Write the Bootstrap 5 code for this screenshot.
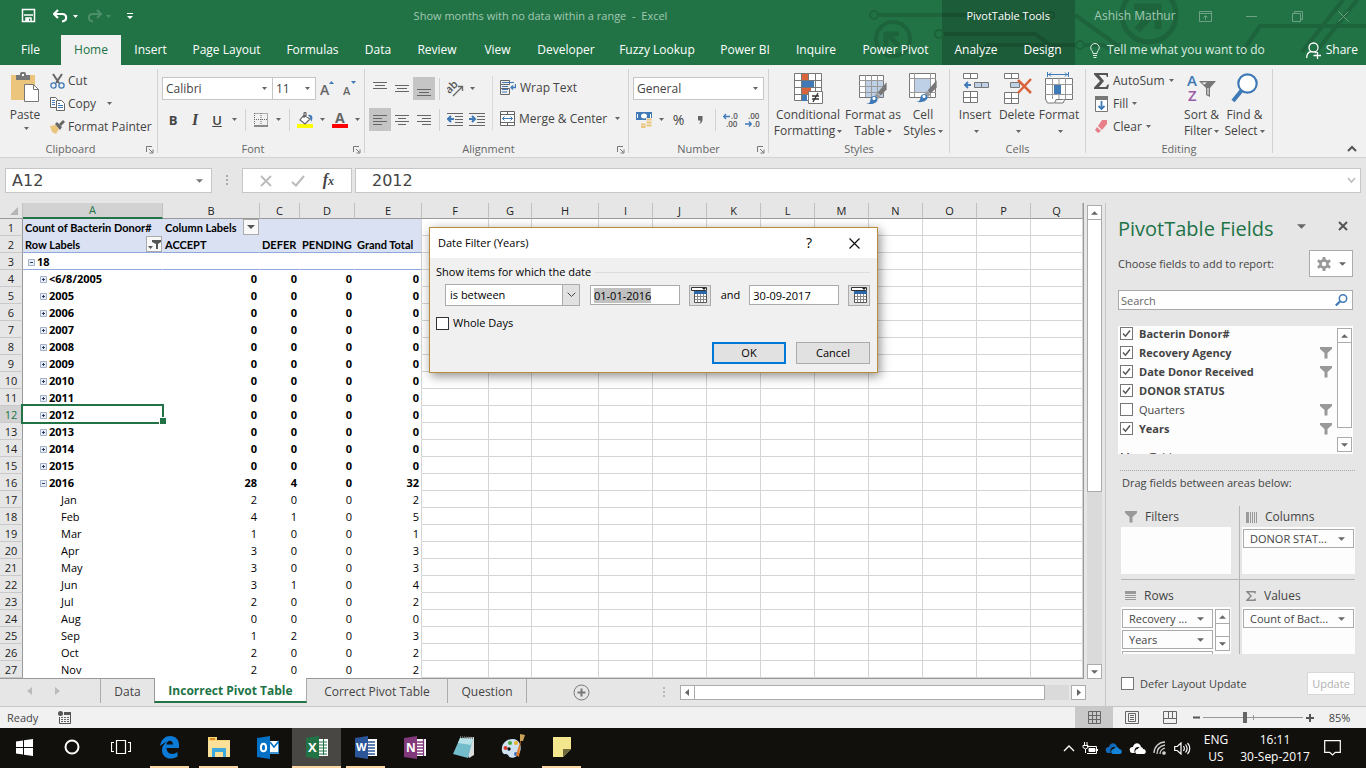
<!DOCTYPE html>
<html lang="en">
<head>
<meta charset="utf-8">
<meta name="viewport" content="width=device-width, initial-scale=1">
<title>Show months with no data within a range - Excel</title>
<link rel="stylesheet" href="https://cdn.jsdelivr.net/npm/bootstrap@5.3.0/dist/css/bootstrap.min.css">
<style>
:root{--xl-green:#217346;--xl-dark:#1c5c39;--xl-grey:#e6e6e6;--xl-ribbon:#f1f1f1;--xl-line:#ababab;--xl-ink:#444;--xl-blue:#3f7ab7}
body{font-family:"Open Sans","Noto Sans",sans-serif;font-size:11px;line-height:16px;color:var(--xl-ink);background:var(--xl-grey);height:100vh;overflow:hidden}
svg{display:block;flex:none}
button,input,select{font:inherit;color:inherit;border-radius:0}
button{padding:0;border:0;background:none;white-space:nowrap}
a{color:inherit;text-decoration:none}
.caret-ico{width:5px;height:3px;fill:#666}

/* title and ribbon tabs */
.app-head{background:var(--xl-green);color:#fff;height:65px;flex:none}
.deco{right:0;top:0;width:526px;height:65px}
.title-row{height:35px;padding-bottom:3px}
.qat{width:270px;padding-left:21px}
.doc-title{padding-right:131px}
.w-tools{width:424px;font-size:12px}
.tools-title{width:133px;font-size:11px}
.user-name{margin-left:20px;width:89px}
.wbtn{width:46px;display:flex;justify-content:center}
.dim{color:#a3c9b3}
.ribbon-tabs{height:30px;display:grid;grid-template-columns:61px 60px 59px 93px 79px 52px 66px 55px 82px 100px 76px 66px 93px 68px 65px 1fr auto}
.ribbon-tabs a{display:flex;align-items:center;justify-content:center;white-space:nowrap;font-size:12px}
.ribbon-tabs a.active{background:var(--xl-ribbon);color:var(--xl-green)}
.ribbon-tabs .tell{padding-left:15px;gap:7px;color:#dcebe2}

/* ribbon */
.ribbon{height:93px;flex:none;background:var(--xl-ribbon);border-bottom:1px solid #d2d2d2;padding-top:4px;font-size:12px}
.rgroup{border-right:1px solid #d2d2d2;height:84px;position:relative;padding-bottom:16px}
.rgroup>.cap{position:absolute;left:0;right:0;bottom:-4px;text-align:center;color:#666;font-size:11px}
.rgroup>.launch{position:absolute;right:3px;bottom:-1px}
.g-clip{width:158px}.g-font{width:207px}.g-align{width:264px}.g-num{width:140px}.g-style{width:181px}.g-cells{width:136px}.g-edit{width:187px}
.rbtn{height:23px;display:flex;align-items:center;gap:4px}
.g-clip .rbtn{gap:3px}
.ibtn{width:22px;height:23px;display:flex;align-items:center;justify-content:center}
.ibtn.on{background:#c5c5c5}
.cbtn{width:13px;height:23px;display:flex;align-items:center;justify-content:center}
.vsep{width:1px;height:22px;background:#d2d2d2}
.tool-row{height:23px;display:flex;align-items:center}
.combo{height:23px;background:#fff;border:1px solid #c6c6c6;display:flex;align-items:center;position:relative}
.combo select{appearance:none;border:0;background:none;width:100%;padding:0 3px;outline:0;height:21px}
.combo svg{position:absolute;right:5px;pointer-events:none}
.f-name{width:111px}.f-size{width:44px;margin-left:-1px}.n-fmt{width:131px}
.big{display:flex;flex-direction:column;align-items:center;line-height:16px;padding-top:3px}
.big svg.pic{width:32px;height:32px;margin-bottom:3px}
.big .caret-ico{display:inline-block;margin-left:2px;vertical-align:2px}
.paste{width:50px}
.paste svg:first-child{margin-bottom:5px}
.fs-s{font-size:13px}
.serif{font-family:"Liberation Serif",serif;font-size:16px;font-weight:700}
.al-left{width:127px}
.al-right{border-left:1px solid #d9d9d9;height:54px;margin-top:7px;padding-left:7px}
.pct{font-size:14px;width:21px}
.w-cond{width:78px}.w-fat{width:52px}.w-cs{width:48px}
.w-cell{width:42px}.w-ed{width:86px}.w-sf{width:43px}

/* formula bar */
.fbar{height:45px;flex:none;padding:10px 5px;font-family:"DejaVu Sans",sans-serif;font-size:16px}
.fbox{background:#fff;border:1px solid #c6c6c6;height:25px;display:flex;align-items:center;position:relative}
.fbox input{border:0;background:none;outline:0;width:100%;padding:0 6px;height:23px}
.fbox input.wide{padding-left:16px}
.n-box{width:207px}.fx-box{width:110px}.fx-in{margin-left:3px}
.grip{margin:0 14px}
.fxt{font-family:"Liberation Serif",serif;font-style:italic;font-weight:700;font-size:16px;line-height:20px}
.fxt small{font-size:12px}

/* grid */
.sheet-area{position:relative}
.sheet-col{min-width:0}
.grid-wrap{border-right:1px solid #999;border-bottom:1px solid #999;overflow:hidden}
table.xl{table-layout:fixed;border-collapse:separate;border-spacing:0;width:100%;color:#000;background:#fff;line-height:15px}
.xl th{background:#e6e6e6;font-weight:400;text-align:center;color:#222;padding:0;border-right:1px solid #ababab;border-bottom:1px solid #c9c9c9;height:17px}
.xl thead th{height:16px;border-bottom-color:#999;line-height:14px;border-right-color:#c0c0c0}
.xl tbody th{border-right-color:#999}
.xl td{height:17px;padding:0 2px;border-right:1px solid #d4d4d4;border-bottom:1px solid #d4d4d4;white-space:nowrap;overflow:hidden;position:relative}
.xl td.p{border-color:transparent}
.xl td.n{text-align:right}
.xl td.last{border-right-color:#d4d4d4}
.xl .hd td.p{background:#d9e1f2;font-weight:700;font-family:Lato,sans-serif}
.xl .rule td.p{border-bottom-color:#8ea9db}
.xl .b td{font-weight:700}
.xl thead th.on{background:#d2d2d2;color:var(--xl-green);border-bottom:2px solid var(--xl-green)}
.xl tbody th.on{background:#d2d2d2;color:var(--xl-green)}
.xl td.sel{overflow:visible}
.xl td.sel::before{content:"";position:absolute;left:-2px;top:-2px;right:-2px;bottom:-2px;border:2px solid var(--xl-green);z-index:1}
.xl td.sel::after{content:"";position:absolute;right:-4px;bottom:-3px;width:6px;height:6px;background:var(--xl-green);border:1px solid #fff;border-right:0;z-index:2;box-sizing:content-box}
.xl .exp{display:inline-block;width:7px;height:7px;box-shadow:0 0 0 1px #a3b0c9 inset;border-radius:1px;background:#e8edf6;margin-right:2px;position:relative}
.xl .exp::before{content:"";position:absolute;left:2px;right:2px;top:3px;height:1px;background:#2c3e66}
.xl .exp.plus::after{content:"";position:absolute;top:2px;bottom:2px;left:3px;width:1px;background:#2c3e66}
.xl td.i1{padding-left:5px}.xl td.i2{padding-left:17px}.xl td.i3{padding-left:38px}
.fbtn{position:absolute;right:0;top:0;width:16px;height:16px;background:#f8f8f8;border:1px solid #ababab;display:flex;align-items:center;justify-content:center}
.vscroll{width:21px;padding:2px 3px 0}
.sbtn{width:15px;height:15px;background:#fff;border:1px solid #ababab;display:flex;align-items:center;justify-content:center;flex:none}
.thumb{background:#fff;border:1px solid #ababab}
.track{background:#dadada}
.v-thumb{height:273px;margin-top:-1px}

/* sheet tabs */
.sheet-tabs{height:27px;font-size:12px}
.sheet-tabs .stab{height:24px;display:flex;align-items:center;justify-content:center;padding-top:2px;border-right:1px solid #ababab;white-space:nowrap}
.sheet-tabs .active{background:#fff;color:var(--xl-green);font-weight:700;border-bottom:2px solid var(--xl-green);border-left:1px solid #999;margin-top:-1px;height:25px}
.sheet-tabs .w-data{width:53px;border-right:0}.w-inc{width:153px}.w-cor{width:141px}.w-que{width:79px}
.tabnav{width:101px;height:24px;padding-left:27px;gap:23px;border-right:1px solid #ababab}
.addtab{margin:5px 0 0 46px}
.hs{margin-top:6px;margin-right:19px}
.h-first{margin-left:15px}.h-track{width:374px;margin-right:2px}.h-thumb{width:351px;margin-left:-1px}

/* dialog */
.dlg{position:absolute;left:429px;top:24px;width:449px;height:146px;background:#f0f0f0;border:1px solid #b98c3b;color:#000;box-shadow:2px 3px 10px rgba(0,0,0,.45);z-index:5}
.dlg-head{height:30px;background:#fff;padding-left:8px}
.dlg-body{padding:6px 7px 0 6px}
.dlg .q{width:32px;font-size:14px}
.dlg .x{width:26px;display:flex;justify-content:center;margin:0 10px 0 16px}
.dlg .field{background:#fff;border:1px solid #ababab;height:20px;width:90px;padding:0 3px;outline:0}
.dlg .field::selection{background:#c0c0c0;color:#000}
.dlg .drop{position:relative;width:137px;height:22px;margin-left:9px}
.dlg .drop select{appearance:none;width:100%;height:100%;border:1px solid #ababab;background:#fff;padding:0 4px}
.dlg .drop span{position:absolute;right:0;top:0;width:18px;height:22px;border:1px solid #ababab;background:#e1e1e1;pointer-events:none;display:flex;align-items:center;justify-content:center}
.cal{width:22px;height:21px;border:1px solid #ababab;background:#e1e1e1;display:flex;align-items:center;justify-content:center;margin-left:9px}
.hr-l{border-top:1px solid #dcdcdc}
.drow{margin-top:4px}.f1{margin-left:10px}.and{margin:0 9px 0 10px}
.whole{margin-top:9px}
.dfoot{margin-top:11px;gap:10px}
.dbtn{width:74px;height:22px;background:#e1e1e1;border:1px solid #ababab}
.dbtn.main{border:2px solid #0078d7}

/* tick boxes */
.tick{appearance:none;width:13px;height:13px;border:1px solid #767676;background:#fff;margin:0;flex:none}
.tick.dark{border-color:#333}
.tick:checked{background:#fff url("data:image/svg+xml,%3Csvg xmlns='http://www.w3.org/2000/svg' viewBox='0 0 11 11'%3E%3Cpath d='M2 5.5l2.5 2.7L9 2.5' fill='none' stroke='%23555' stroke-width='1.5'/%3E%3C/svg%3E")}

/* field pane */
.pane{width:261px;flex:none;border-left:1px solid #c6c6c6;padding:0 13px 0 12px}
.pane h2{font-size:20px;line-height:26px;color:var(--xl-green);margin:0;font-weight:400}
.pane-top{height:26px;margin-top:13px}
.pane-top>svg{margin-bottom:6px}.pclose{margin:0 5px 6px 32px}
.choose{margin-top:8px}
.gearbtn{width:44px;height:27px;border:1px solid #ababab;background:#fff}
.search{height:20px;border:1px solid #ababab;background:#fff;margin-top:13px}
.search input{border:0;outline:0;padding:0 2px;height:18px;background:none}
.search input::placeholder{color:#666;opacity:1}
.flist{height:128px;background:#fdfdfd;overflow:hidden;margin-top:16px;padding-right:1px}
.flist ul{margin-top:-2px}
.flist li{height:19px;display:flex;align-items:center;gap:6px;padding-left:2px}
.flist li.b{font-weight:700}
.flist li.more{padding-top:12px;height:26px}
.lscroll{width:15px;padding:2px 0}
.l-thumb{height:86px;margin-top:-1px}
.ff{fill:#999;margin-right:5px;margin-left:auto}
.dots{border-top:1px dotted #aaa;margin:16px -2px 0 2px}
.drag{padding:4px 0 0 4px;height:35px}
.areas{display:grid;grid-template-columns:118px 1fr;margin:0 -2px 0 3px}
.area{padding:1px 0 5px;height:74px}
.area.r{border-left:1px solid #b5b5b5;padding-left:2px}
.area.l{padding-right:8px}
.area.t{border-bottom:1px solid #b5b5b5}
.area.b2{padding-top:5px;padding-bottom:0}
.area .lab{height:20px;display:flex;align-items:center;padding-left:4px;gap:8px;font-size:12px}
.area.b2 .lab{height:22px}
.area .box{height:47px;background:#fdfdfd;overflow:hidden;padding:2px 1px}
.pill{height:19px;border:1px solid #ababab;width:100%;display:flex;align-items:center;justify-content:space-between;padding:0 8px 0 6px;background:#fdfdfd;margin-bottom:2px}
.rl{min-width:0}.rsc{width:15px;margin-left:2px}.r-thumb{height:14px;margin:-1px 0}
.defer{margin:18px -2px 0 3px}.defer label{padding-left:6px}
.upd{width:48px;height:23px;border:1px solid #d8d8d8;background:#fdfdfd;color:#b1b1b1}

/* status and task bar */
footer{flex:none}
.status{height:22px;background:#f1f1f1;border-top:1px solid #c6c6c6}
.ready{margin-left:7px}.macro{margin-left:20px}
.vbtn{width:38px;height:21px;display:flex;align-items:center;justify-content:center}
.vbtn.on{background:#c9c9c9}
.zm{width:14px;display:flex;justify-content:center}
.zl{width:37px;margin-right:12px;padding-left:8px;text-align:center}
.zoom{appearance:none;width:100px;height:12px;background:linear-gradient(#999,#999) center/100% 1px no-repeat,linear-gradient(#999,#999) center/1px 5px no-repeat;margin:0}
.zoom::-webkit-slider-thumb{appearance:none;width:4px;height:11px;background:#666}
.tasks{height:40px;background:#12100d;color:#fff;font-size:12px}
.task{width:49px;height:40px;display:flex;align-items:center;justify-content:center;border-bottom:2px solid transparent;position:relative}
.task.sys{width:48px}
.task.run::after{content:"";position:absolute;left:5px;right:5px;bottom:-2px;height:2px;background:#fbd6a2}
.task.now{background:#494743}.task.now::after{left:0;right:0}
.traybox{gap:7px;padding-right:25px}
.lang{width:28px;line-height:17px;margin-left:4px}.clock{width:76px;line-height:17px;margin-right:4px}
</style>
</head>
<body class="d-flex flex-column">
<svg width="0" height="0" class="position-absolute" aria-hidden="true">
 <symbol id="car" viewBox="0 0 5 3"><path d="M0 0h5L2.500 3z"/></symbol>
 <symbol id="lau" viewBox="0 0 9 9"><path d="M1.500 7V1.500H7M4 4l3.500 3.500M8 4.500V8H4.500" fill="none" stroke="#777"/></symbol>
 <symbol id="fun" viewBox="0 0 12 12"><path d="M0 0h12v2L7.500 6v5.500h-3V6L0 2z"/></symbol>
 <symbol id="up" viewBox="0 0 8 4"><path d="M0 4L4 0l4 4z"/></symbol>
 <symbol id="dn" viewBox="0 0 8 4"><path d="M0 0l4 4 4-4z"/></symbol>
 <symbol id="cal" viewBox="0 0 17 16"><path d="M3.500 4.500h12v11h-12z" fill="#fff" stroke="#555"/><path d="M6.500 7v8M9.500 7v8M12.500 7v8M4 9.500h11M4 12.500h11" stroke="#888"/><path d="M3 4h13v3H3z" fill="#2a66a8"/><path d="M.5.500h15v3H.5z" fill="#fff" stroke="#333"/><path d="M11 1h4l-2 2z" fill="#222"/></symbol>
 <symbol id="brush" viewBox="0 0 18 20"><path d="M17 1v6l-5 5-2.500-2.500z" fill="#777"/><path d="M9 10l3 3-2 2-3-3z" fill="#999"/><path d="M0 19c4 0 3-3 4-5 2-3 6-1 5.500 1.500C9 19 4 20 0 19z" fill="#3f7ab7"/><circle cx="6.500" cy="14.500" r="1.300" fill="#fff"/></symbol>
</svg>

<header class="app-head position-relative">
 <svg class="deco position-absolute" viewBox="0 0 526 65" fill="none" stroke="#1c6239" stroke-width="4">
  <path d="M102 0h133v65H102z" fill="#1c5c39" stroke="none"/>
  <g stroke="#1d633c"><circle cx="34" cy="15" r="4" stroke-width="2"/><path d="M39 15h63"/><circle cx="53" cy="39" r="17"/><path d="M46 34h13M46 32v14M47 34l12 12" stroke-width="5"/><circle cx="309" cy="15" r="27" stroke-width="5"/><path d="M294 7h24v22M318 8l-21 22" stroke-width="7"/><path d="M235 15l42 30h5M245 45h18l18 10M400 55l20-29h106M462 52L503 0M476 52L517 0"/><circle cx="240" cy="45" r="4" stroke-width="2"/></g>
  <g stroke="#184f31"><path d="M102 15h104M102 34h93l25 18M138 52l10-7h87"/><circle cx="211" cy="15" r="3" stroke-width="2"/></g><circle cx="99" cy="34" r="4" stroke-width="2"/>
 </svg>
 <div class="title-row d-flex align-items-center position-relative">
  <div class="qat d-flex align-items-center">
   <button aria-label="Save"><svg width="16" height="16" viewBox="0 0 16 16"><path d="M1.500 1.500h12v12h-12z" fill="none" stroke="#fff" stroke-width="1.500"/><path d="M3 7h9M5 14v-4h5v4" stroke="#fff" stroke-width="1.500" fill="none"/><path d="M5 10h3v4H5z" fill="#fff"/></svg></button>
   <button class="ms-3" aria-label="Undo"><svg width="16" height="16" viewBox="0 0 16 16"><path d="M5 2L1 6l4 4M1.500 6H9c5.500 0 5.500 7 0 7.500" fill="none" stroke="#fff" stroke-width="2.200"/></svg></button>
   <svg class="ms-1" width="5" height="3" fill="#fff"><use href="#car"/></svg>
   <button class="ms-2" aria-label="Redo"><svg width="16" height="16" viewBox="0 0 16 16"><path d="M11 2l4 4-4 4M14.500 6H7c-5.500 0-5.500 7 0 7.500" fill="none" stroke="#4d8f6a" stroke-width="2"/></svg></button>
   <svg class="ms-1" width="5" height="3" fill="#4d8f6a"><use href="#car"/></svg>
   <svg class="ms-3" width="6" height="7" viewBox="0 0 6 7" fill="#fff"><path d="M0 0h6v1H0zM0 3h6L3 6z"/></svg>
  </div>
  <div class="doc-title flex-grow-1 text-center dim">Show months with no data within a range&nbsp; -&nbsp; Excel</div>
  <div class="d-flex align-items-center w-tools">
   <div class="tools-title text-center">PivotTable Tools</div>
   <div class="dim user-name">Ashish Mathur</div>
   <button class="wbtn" aria-label="Ribbon display options"><svg width="13" height="11" viewBox="0 0 13 11" fill="none" stroke="#6ea286"><path d="M.5.5h12v10H.5zM.5 2.500h12M6.500 9V4.500M4.500 6.500l2-2 2 2"/></svg></button>
   <button class="wbtn" aria-label="Minimise"><svg width="11" height="11" viewBox="0 0 11 11" stroke="#6ea286"><path d="M0 5.500h11"/></svg></button>
   <button class="wbtn" aria-label="Restore"><svg width="11" height="11" viewBox="0 0 11 11" fill="none" stroke="#6ea286"><path d="M.5 2.500h8v8h-8zM2.500 2.500v-2h8v8h-2"/></svg></button>
   <button class="wbtn" aria-label="Close"><svg width="11" height="11" viewBox="0 0 11 11" stroke="#6ea286"><path d="M.5.500l10 10M10.500.500l-10 10"/></svg></button>
  </div>
 </div>
 <nav class="ribbon-tabs position-relative">
  <a href="#">File</a><a href="#" class="active">Home</a><a href="#">Insert</a><a href="#">Page Layout</a><a href="#">Formulas</a><a href="#">Data</a><a href="#">Review</a><a href="#">View</a><a href="#">Developer</a><a href="#">Fuzzy Lookup</a><a href="#">Power BI</a><a href="#">Inquire</a><a href="#">Power Pivot</a><a href="#">Analyze</a><a href="#">Design</a>
  <a href="#" class="tell justify-content-start"><svg width="10" height="15" viewBox="0 0 10 15" fill="none" stroke="#e3f0e8"><path d="M3 10.500C3 8 .7 7 .7 4.700a4.300 4.200 0 018.600 0C9.300 7 7 8 7 10.500zM3 12.500h4M3.500 14.500h3"/></svg><span>Tell me what you want to do</span></a>
  <a href="#" class="pe-2"><svg width="16" height="17" viewBox="0 0 16 17" fill="none" stroke="#fff" stroke-width="1.300"><circle cx="7.500" cy="5.500" r="4.500"/><path d="M.7 16c0-4 2-6 4.500-6.500M9 10l1.500 1M7.500 13.500H15M11.500 10v7"/></svg><span class="ms-1">Share</span></a>
 </nav>
</header>

<section class="ribbon d-flex" aria-label="Ribbon">
 <div class="rgroup g-clip d-flex">
  <button class="big paste"><svg width="30" height="30" viewBox="0 0 30 30"><path d="M1 3h24v25H1z" fill="#ecc57d"/><path d="M6 3h4V2c0-3 6-3 6 0v1h4v5H6z" fill="#777"/><path d="M12 2h2v2h-2z" fill="#fff"/><path d="M14.500 12.500h9l5 5v12h-14z" fill="#fff" stroke="#777"/><path d="M23.500 12.500v5h5" fill="none" stroke="#777"/></svg><span>Paste</span><svg class="caret-ico mt-1"><use href="#car"/></svg></button>
  <div>
   <button class="rbtn"><svg width="15" height="16" viewBox="0 0 15 16" fill="none"><path d="M3 1l6 9M12 1L6 10" stroke="#666" stroke-width="2"/><circle cx="3.500" cy="12.500" r="2.600" stroke="#3f7ab7" stroke-width="1.300"/><circle cx="11.500" cy="12.500" r="2.600" stroke="#3f7ab7" stroke-width="1.300"/></svg>Cut</button>
   <button class="rbtn"><svg width="15" height="15" viewBox="0 0 15 15" fill="#fff" stroke="#666"><path d="M.5 1.500h5l2 2v8h-7z"/><path d="M6.500 4.500h5l3 3v7h-8z"/><path d="M2 4.500h3M2 6.500h3M2 8.500h3M8 7.500h2M8 9.500h5M8 11.500h5" stroke="#3f7ab7"/></svg>Copy<svg class="caret-ico ms-2"><use href="#car"/></svg></button>
   <button class="rbtn"><svg width="15" height="15" viewBox="0 0 15 15"><path d="M0 7l6-1 3 4-3 5-4-2z" fill="#ecc57d"/><path d="M5 5l2-2 5 5-2 3z" fill="#666"/><path d="M9 5l4-4 2 2-4 4z" fill="#666"/></svg>Format Painter</button>
  </div>
  <span class="cap pe-3">Clipboard</span><button class="launch" aria-label="Clipboard options"><svg width="9" height="9"><use href="#lau"/></svg></button>
 </div>

 <div class="rgroup g-font">
  <div class="d-flex ps-1 pt-2">
   <label class="combo f-name"><select aria-label="Font"><option>Calibri</option></select><svg class="caret-ico"><use href="#car"/></svg></label>
   <label class="combo f-size"><select aria-label="Font size"><option>11</option></select><svg class="caret-ico"><use href="#car"/></svg></label>
   <button class="ibtn" aria-label="Increase font size"><svg width="18" height="22" viewBox="0 0 18 22"><text x="2" y="17" font-size="14" font-weight="600" fill="#666">A</text><path d="M11 6l2.500-3L16 6z" fill="#3f7ab7"/></svg></button>
   <button class="ibtn" aria-label="Decrease font size"><svg width="18" height="22" viewBox="0 0 18 22"><text x="3" y="17" font-size="11" font-weight="600" fill="#666">A</text><path d="M11 3h5l-2.500 3z" fill="#3f7ab7"/></svg></button>
  </div>
  <div class="tool-row mt-2 ps-1">
   <button class="ibtn fw-bold fs-s">B</button><button class="ibtn fst-italic fs-s serif">I</button><button class="ibtn fw-semibold text-decoration-underline fs-s">U</button><button class="cbtn" aria-label="Underline styles"><svg class="caret-ico"><use href="#car"/></svg></button>
   <span class="vsep mx-1"></span>
   <button class="ibtn" aria-label="Borders"><svg width="14" height="14" viewBox="0 0 14 14" stroke="#666" fill="none"><path d="M.5.500h13v12M.5 0v12M7 0v12M0 6.500h14" stroke-dasharray="1 1"/><path d="M0 13h14" stroke-width="1.500"/></svg></button><button class="cbtn" aria-label="Border styles"><svg class="caret-ico"><use href="#car"/></svg></button>
   <span class="vsep mx-1"></span>
   <button class="ibtn" aria-label="Fill colour"><svg width="17" height="16" viewBox="0 0 17 16"><path d="M0 12h16v4H0z" fill="#ff0"/><path d="M7 3l6 4-5 5-5-4zM7 6V1.500C7 0 9 0 9 1.500V5" fill="#fff" stroke="#666" stroke-width="1.200"/><path d="M11 3c4-1 6 3 3 7 0-3-1-5-3-7z" fill="#3f7ab7"/></svg></button><button class="cbtn" aria-label="Fill colours"><svg class="caret-ico"><use href="#car"/></svg></button>
   <button class="ibtn" aria-label="Font colour"><svg width="16" height="22" viewBox="0 0 16 22"><text x="3" y="14" font-size="14" font-weight="700" fill="#666">A</text><path d="M0 15h16v4H0z" fill="red"/></svg></button><button class="cbtn" aria-label="Font colours"><svg class="caret-ico"><use href="#car"/></svg></button>
  </div>
  <span class="cap pe-3">Font</span><button class="launch" aria-label="Font options"><svg width="9" height="9"><use href="#lau"/></svg></button>
 </div>

 <div class="rgroup g-align d-flex">
  <div class="al-left">
   <div class="tool-row mt-2 ps-1">
    <button class="ibtn" aria-label="Top align"><svg width="14" height="18" viewBox="0 0 14 18" stroke="#666"><path d="M0 2.500h14M2 5.500h10M0 8.500h14"/></svg></button>
    <button class="ibtn" aria-label="Middle align"><svg width="14" height="14" viewBox="0 0 14 14" stroke="#666"><path d="M0 3.500h14M2 6.500h10M0 9.500h14"/></svg></button>
    <button class="ibtn on" aria-label="Bottom align"><svg width="14" height="14" viewBox="0 0 14 14" stroke="#666"><path d="M0 7.500h14M2 10.500h10M0 13.500h14"/></svg></button>
    <span class="vsep mx-1"></span>
    <button class="ibtn" aria-label="Orientation"><svg width="17" height="16" viewBox="0 0 17 16"><text transform="rotate(-45 5 9)" x="0" y="10" font-size="11" font-weight="600" fill="#555">ab</text><path d="M6 15L15 6M11 5.500h4.500V10" fill="none" stroke="#666" stroke-width="1.300"/></svg></button><button class="cbtn" aria-label="Orientations"><svg class="caret-ico"><use href="#car"/></svg></button>
   </div>
   <div class="tool-row mt-2 ps-1">
    <button class="ibtn on" aria-label="Align left"><svg width="14" height="14" viewBox="0 0 14 14" stroke="#666"><path d="M0 2.500h14M0 5.500h9M0 8.500h14M0 11.500h9"/></svg></button>
    <button class="ibtn" aria-label="Centre"><svg width="14" height="14" viewBox="0 0 14 14" stroke="#666"><path d="M0 2.500h14M3 5.500h8M0 8.500h14M3 11.500h8"/></svg></button>
    <button class="ibtn" aria-label="Align right"><svg width="14" height="14" viewBox="0 0 14 14" stroke="#666"><path d="M0 2.500h14M5 5.500h9M0 8.500h14M5 11.500h9"/></svg></button>
    <span class="vsep mx-1"></span>
    <button class="ibtn" aria-label="Decrease indent"><svg width="16" height="13" viewBox="0 0 16 13" stroke="#666"><path d="M0 .5h16M8 3.500h8M8 6.500h8M8 9.500h8M0 12.500h16"/><path d="M7 6H2M4 3L1 6l3 3" stroke="#3f7ab7" stroke-width="2" fill="none"/></svg></button>
    <button class="ibtn" aria-label="Increase indent"><svg width="16" height="13" viewBox="0 0 16 13" stroke="#666"><path d="M0 .5h16M8 3.500h8M8 6.500h8M8 9.500h8M0 12.500h16"/><path d="M0 6h5M3 3l3 3-3 3" stroke="#3f7ab7" stroke-width="2" fill="none"/></svg></button>
   </div>
  </div>
  <div class="al-right">
   <button class="rbtn"><svg width="16" height="15" viewBox="0 0 16 15" fill="none" stroke="#666"><path d="M.5.500h9v4h-9zM.5 8.500h9v6h-9zM.5 4.500v4"/><path d="M2 2.500h12M2 6.500h6M2 9.500h6M2 12h5" stroke="#3f7ab7" /><path d="M15.500 4v3.500H11M13 5.500l-2 2 2 2" stroke="#3f7ab7" stroke-width="1.300"/></svg>Wrap Text</button>
   <button class="rbtn mt-2"><svg width="15" height="15" viewBox="0 0 15 15" fill="#fff" stroke="#666"><path d="M.5.500h14v14H.5zM.5 3.500h14M.5 11.500h14M7.500.500v3M7.500 11.500v3"/><path d="M2.500 7.500h10M4.500 5.500l-2 2 2 2M10.500 5.500l2 2-2 2" fill="none" stroke="#3f7ab7"/></svg>Merge &amp; Center<svg class="caret-ico ms-1"><use href="#car"/></svg></button>
  </div>
  <span class="cap pe-3">Alignment</span><button class="launch" aria-label="Alignment options"><svg width="9" height="9"><use href="#lau"/></svg></button>
 </div>

 <div class="rgroup g-num">
  <div class="pt-2 ps-1 d-flex"><label class="combo n-fmt"><select aria-label="Number format"><option>General</option></select><svg class="caret-ico"><use href="#car"/></svg></label></div>
  <div class="tool-row mt-2 ps-1">
   <button class="ibtn" aria-label="Accounting format"><svg width="17" height="17" viewBox="0 0 17 17"><path d="M0 1h16v8H0z" fill="#3f7ab7"/><ellipse cx="8" cy="5" rx="3" ry="2.500" fill="#fff"/><path d="M1.500 3v4M14.500 3v4" stroke="#fff"/><path d="M10 7h6v9h-6zM4 12h6v4H4z" fill="#f1f1f1"/><path d="M10.500 8.500h5M10.500 11.500h5M10.500 14.500h5M5 13.500h4.500M5 16h4.500" stroke="#ecc57d" stroke-width="2"/></svg></button><button class="cbtn" aria-label="Accounting formats"><svg class="caret-ico"><use href="#car"/></svg></button>
   <button class="ibtn pct">%</button><button class="ibtn" aria-label="Comma style"><svg width="5" height="8" viewBox="0 0 5 8" fill="#666"><path d="M0 0h4.500v3.500C4.500 6 3 7.500 1 8c1-1 1.500-2 1.500-3.500H0z"/></svg></button><span class="vsep mx-1"></span>
   <button class="ibtn" aria-label="Increase decimal"><svg width="18" height="22" viewBox="0 0 18 22"><text x="9" y="10" font-size="8" font-weight="600" fill="#555">.0</text><text x="4" y="18" font-size="8" font-weight="600" fill="#555">.00</text><path d="M8 7.500H2M4 5L1.700 7.500 4 10" fill="none" stroke="#3f7ab7" stroke-width="1.300"/></svg></button>
   <button class="ibtn" aria-label="Decrease decimal"><svg width="18" height="22" viewBox="0 0 18 22"><text x="4" y="10" font-size="8" font-weight="600" fill="#555">.00</text><text x="9" y="18" font-size="8" font-weight="600" fill="#555">.0</text><path d="M1 15h6M5 12.500L7.300 15 5 17.500" fill="none" stroke="#3f7ab7" stroke-width="1.300"/></svg></button>
  </div>
  <span class="cap">Number</span><button class="launch" aria-label="Number options"><svg width="9" height="9"><use href="#lau"/></svg></button>
 </div>

 <div class="rgroup g-style d-flex">
  <button class="big w-cond"><svg class="pic" viewBox="0 0 32 32"><path d="M2.500 1.500h27v27h-27z" fill="#fff" stroke="#777"/><path d="M2 8.500h28M2 15.500h28M2 22.500h28M9.500 1v28M16.500 1v28M23.500 1v28" stroke="#777"/><path d="M10 2h6v6h-6zM10 16h9v6h-9z" fill="#d9633b"/><path d="M10 9h12v6H10zM10 23h5v6h-5z" fill="#3f7ab7"/><path d="M16.500 19.500h14v12h-14z" fill="#fff" stroke="#777"/><path d="M20 24h7M20 27h7M26 21l-5 9" stroke="#333" stroke-width="1.300"/></svg><span>Conditional</span><span>Formatting<svg class="caret-ico"><use href="#car"/></svg></span></button>
  <button class="big w-fat"><svg class="pic" viewBox="0 0 32 32"><path d="M2.500 3.500h24v22h-24z" fill="#fff" stroke="#777"/><path d="M9 9h17v16H9z" fill="#bdd0e6"/><path d="M2 8.500h25M2 14.500h25M2 20.500h25M8.500 3v22M14.500 3v22M20.500 3v22" stroke="#999"/><svg x="9" y="9" width="22" height="24"><use href="#brush"/></svg></svg><span>Format as</span><span>Table<svg class="caret-ico"><use href="#car"/></svg></span></button>
  <button class="big w-cs"><svg class="pic" viewBox="0 0 32 32"><path d="M2.500 1.500h26v24h-26z" fill="#fff" stroke="#777"/><path d="M2 6.500h27M2 20.500h27M7.500 1v24M23.500 1v24" stroke="#999"/><path d="M8 7h15v13H8z" fill="#bdd0e6"/><svg x="9" y="7" width="22" height="24"><use href="#brush"/></svg></svg><span>Cell</span><span>Styles<svg class="caret-ico"><use href="#car"/></svg></span></button>
  <span class="cap">Styles</span>
 </div>

 <div class="rgroup g-cells d-flex ps-1">
  <button class="big w-cell"><svg class="pic" viewBox="0 0 32 32" fill="#fff" stroke="#777"><path d="M4.500 1.500h14v5h-14zM11.500 1.500v5M4.500 19.500h14v11h-14zM4.500 25.500h14M11.500 19.500v11"/><path d="M15.500 10.500h14v5h-14zM22.500 10.500v5" fill="#bdd0e6"/><path d="M12 13H6M9 10l-3 3 3 3" fill="none" stroke="#3f7ab7" stroke-width="1.800"/></svg><span>Insert</span><span><svg class="caret-ico"><use href="#car"/></svg></span></button>
  <button class="big w-cell"><svg class="pic" viewBox="0 0 32 32" fill="#fff" stroke="#777"><path d="M3.500 1.500h14v5h-14zM10.500 1.500v5M3.500 20.500h14v11h-14zM3.500 26.500h14M10.500 20.500v11"/><path d="M9.500 10.500h9v5h-9z" fill="#bdd0e6"/><path d="M17 8l13 13M30 7L17 21" stroke="#d9633b" stroke-width="2.500"/></svg><span>Delete</span><span><svg class="caret-ico"><use href="#car"/></svg></span></button>
  <button class="big w-cell"><svg class="pic" viewBox="0 0 32 32" fill="#fff" stroke="#777"><path d="M2.500 6.500h27v21h-27z"/><path d="M2 12.500h28M2 22.500h28M9.500 6v21M22.500 6v21M16 6v6M16 22v5" stroke="#999"/><path d="M11 13h7v9h-7z" fill="#3f7ab7" stroke="none"/><path d="M4.500 0v5M25.500 0v5M5 2.500h20M8 .5l-2 2 2 2M22 .5l2 2-2 2" fill="none" stroke="#3f7ab7"/><path d="M2.500 27l2 4h7l2-4M12 31h8l2-4" /></svg><span>Format</span><span><svg class="caret-ico"><use href="#car"/></svg></span></button>
  <span class="cap">Cells</span>
 </div>

 <div class="rgroup g-edit d-flex ps-2">
  <div class="w-ed">
   <button class="rbtn"><svg width="15" height="16" viewBox="0 0 15 16"><path d="M0 0h14v4h-1l-1-2H5l5 6-5 6h7l1.500-2.500H15L14 16H0v-1.500L6 8 0 1.500z" fill="#555"/></svg>AutoSum<svg class="caret-ico"><use href="#car"/></svg></button>
   <button class="rbtn"><svg width="15" height="16" viewBox="0 0 15 16"><path d="M1.500.500h12v15h-12z" fill="#fff" stroke="#777"/><path d="M1 0h13v4H1z" fill="#777"/><path d="M7.500 5v8M4.500 10l3 3 3-3" fill="none" stroke="#3f7ab7" stroke-width="1.800"/></svg>Fill<svg class="caret-ico"><use href="#car"/></svg></button>
   <button class="rbtn"><svg width="15" height="15" viewBox="0 0 15 15"><path d="M8 1h5v4L8 11 4 7z" fill="#e8808a"/><path d="M3 8l4 4-3 2-3-3z" fill="#e8808a"/></svg>Clear<svg class="caret-ico"><use href="#car"/></svg></button>
  </div>
  <button class="big w-sf"><svg class="pic" viewBox="0 0 32 32"><text x="1" y="14" font-size="15" font-weight="600" fill="#3f7ab7">A</text><text x="2" y="29" font-size="15" font-weight="600" fill="#9b5ba8">Z</text><path d="M13 9h17l-6 7v9l-4-2v-7z" fill="#777"/><path d="M16 10.500h5l-3 2zM21.500 16h1v7l-1-.5z" fill="#fff"/></svg><span>Sort &amp;</span><span>Filter<svg class="caret-ico"><use href="#car"/></svg></span></button>
  <button class="big w-sf"><svg class="pic" viewBox="0 0 32 32"><path d="M13 18L4 29" stroke="#3f7ab7" stroke-width="4"/><circle cx="18.500" cy="11.500" r="9.200" fill="#fff" stroke="#3f7ab7" stroke-width="2.200"/></svg><span>Find &amp;</span><span>Select<svg class="caret-ico"><use href="#car"/></svg></span></button>
  <span class="cap">Editing</span>
 </div>
 <button class="ms-auto align-self-end mb-1 me-2" aria-label="Collapse ribbon"><svg width="12" height="8" viewBox="0 0 12 8"><path d="M2 6l4-4 4 4" fill="none" stroke="#555" stroke-width="2"/></svg></button>
</section>

<section class="fbar d-flex align-items-start">
 <div class="fbox n-box"><input aria-label="Name box" value="A12"><svg class="me-2" width="7" height="4" fill="#777"><use href="#dn" /></svg></div>
 <svg class="grip" width="2" height="25" viewBox="0 0 2 25" fill="#aaa"><path d="M0 7h2v2H0zM0 11h2v2H0zM0 15h2v2H0z"/></svg>
 <div class="fbox fx-box justify-content-around px-2">
  <button aria-label="Cancel"><svg width="13" height="12" viewBox="0 0 13 12"><path d="M1 1l10 10M11 1L1 11" stroke="#bbb" stroke-width="1.800"/></svg></button>
  <button aria-label="Enter"><svg width="14" height="12" viewBox="0 0 14 12"><path d="M1 7l4 3.500L13 1" fill="none" stroke="#bbb" stroke-width="2"/></svg></button>
  <button class="fxt">f<small>x</small></button>
 </div>
 <div class="fbox flex-grow-1 fx-in"><input class="wide" aria-label="Formula" value="2012"><svg class="me-1" width="9" height="7" viewBox="0 0 9 7"><path d="M1 1l3.500 4L8 1" fill="none" stroke="#bbb" stroke-width="1.500"/></svg></div>
</section>

<main class="d-flex flex-grow-1 sheet-area">
 <div class="flex-grow-1 d-flex flex-column sheet-col">
  <div class="d-flex">
   <div class="grid-wrap flex-grow-1">
    <table class="xl"><colgroup id="cols"></colgroup><thead><tr id="heads"></tr></thead><tbody id="rows"></tbody></table>
   </div>
   <div class="vscroll d-flex flex-column">
    <button class="sbtn" aria-label="Scroll up"><svg width="7" height="4" fill="#666"><use href="#up"/></svg></button>
    <div class="track flex-grow-1 d-flex flex-column"><div class="thumb v-thumb"></div></div>
    <button class="sbtn" aria-label="Scroll down"><svg width="7" height="4" fill="#666"><use href="#dn"/></svg></button>
   </div>
  </div>
  <div class="sheet-tabs d-flex align-items-start">
   <div class="tabnav d-flex align-items-center"><svg width="5" height="8" viewBox="0 0 5 8" fill="#bbb"><path d="M5 0v8L0 4z"/></svg><svg width="5" height="8" viewBox="0 0 5 8" fill="#bbb"><path d="M0 0v8l5-4z"/></svg></div>
   <a href="#" class="stab w-data">Data</a><a href="#" class="stab active w-inc">Incorrect Pivot Table</a><a href="#" class="stab w-cor">Correct Pivot Table</a><a href="#" class="stab w-que">Question</a>
   <button class="addtab" aria-label="New sheet"><svg width="17" height="17" viewBox="0 0 17 17" fill="none" stroke="#777"><circle cx="8.500" cy="8.500" r="7.500"/><path d="M4.500 8.500h8M8.500 4.500v8" stroke-width="2"/></svg></button>
   <div class="hs ms-auto d-flex">
    <svg width="2" height="15" viewBox="0 0 2 15" fill="#bbb"><path d="M0 2h2v2H0zM0 6h2v2H0zM0 10h2v2H0z"/></svg>
    <button class="sbtn h-first" aria-label="Scroll left"><svg width="5" height="7" viewBox="0 0 5 7" fill="#666"><path d="M4 0v7L0 3.500z"/></svg></button>
    <div class="track d-flex h-track"><div class="thumb h-thumb"></div></div>
    <button class="sbtn" aria-label="Scroll right"><svg width="5" height="7" viewBox="0 0 5 7" fill="#666"><path d="M1 0v7l4-3.500z"/></svg></button>
   </div>
  </div>
 </div>

 <aside class="pane">
  <div class="d-flex align-items-center pane-top"><h2 class="flex-grow-1">PivotTable Fields</h2><svg width="9" height="5" viewBox="0 0 8 4" fill="#666"><path d="M0 0h8L4 4z"/></svg><button class="pclose" aria-label="Close pane"><svg width="10" height="10" viewBox="0 0 10 10"><path d="M1 1l8 8M9 1L1 9" stroke="#555" stroke-width="2"/></svg></button></div>
  <div class="d-flex align-items-center justify-content-between choose"><span>Choose fields to add to report:</span>
   <button class="gearbtn d-flex align-items-center justify-content-center gap-2" aria-label="Tools"><svg width="14" height="14" viewBox="0 0 14 14"><circle cx="7" cy="7" r="3.600" fill="none" stroke="#999" stroke-width="2.600"/><path d="M7 0v3M7 11v3M.8 3.500l2.700 1.500M10.500 9l2.700 1.500M.8 10.500L3.500 9M10.500 5l2.700-1.500" stroke="#999" stroke-width="3"/></svg><svg width="7" height="4" fill="#666"><use href="#dn"/></svg></button></div>
  <div class="search d-flex align-items-center"><input class="flex-grow-1" aria-label="Search fields" placeholder="Search"><svg class="me-1" width="13" height="12" viewBox="0 0 13 12"><circle cx="8" cy="4.500" r="3.700" fill="none" stroke="#3f7ab7" stroke-width="1.500"/><path d="M5.500 7L.8 11.500" stroke="#3f7ab7" stroke-width="2.200"/></svg></div>
  <div class="flist d-flex">
   <ul class="list-unstyled flex-grow-1 mb-0" id="fields"></ul>
   <div class="lscroll d-flex flex-column"><button class="sbtn" aria-label="Up"><svg width="7" height="4" fill="#666"><use href="#up"/></svg></button><div class="flex-grow-1"><div class="thumb l-thumb"></div></div><button class="sbtn" aria-label="Down"><svg width="7" height="4" fill="#666"><use href="#dn"/></svg></button></div>
  </div>
  <div class="dots"></div>
  <div class="drag">Drag fields between areas below:</div>
  <div class="areas">
   <div class="area l t"><div class="lab"><svg width="12" height="12" fill="#999"><use href="#fun"/></svg>Filters</div><div class="box"></div></div>
   <div class="area r t"><div class="lab"><svg width="11" height="11" viewBox="0 0 11 11" stroke="#999"><path d="M1.500 0v11" stroke-width="3"/><path d="M4.500 0v11M6.500 0v11M8.500 0v11M10.500 0v11"/></svg>Columns</div><div class="box"><button class="pill">DONOR STAT...<svg width="7" height="4" fill="#666"><use href="#dn"/></svg></button></div></div>
   <div class="area l b2"><div class="lab"><svg width="11" height="11" viewBox="0 0 11 11" stroke="#999"><path d="M0 1.500h11" stroke-width="3"/><path d="M0 4.500h11M0 6.500h11M0 8.500h11"/></svg>Rows</div><div class="box d-flex"><div class="flex-grow-1 rl"><button class="pill">Recovery ...<svg width="7" height="4" fill="#666"><use href="#dn"/></svg></button><button class="pill">Years<svg width="7" height="4" fill="#666"><use href="#dn"/></svg></button><button class="pill" aria-label="Months"></button></div><div class="rsc"><button class="sbtn" aria-label="Up"><svg width="7" height="4" fill="#666"><use href="#up"/></svg></button><div class="thumb r-thumb"></div><button class="sbtn" aria-label="Down"><svg width="7" height="4" fill="#666"><use href="#dn"/></svg></button></div></div></div>
   <div class="area r b2"><div class="lab"><svg width="10" height="10" viewBox="0 0 10 10"><path d="M9 2.500V.8H1L5 5 1 9.200h8V7.500" fill="none" stroke="#888" stroke-width="1.500"/></svg>Values</div><div class="box"><button class="pill">Count of Bact...<svg width="7" height="4" fill="#666"><use href="#dn"/></svg></button></div></div>
  </div>
  <div class="d-flex align-items-center defer"><input type="checkbox" class="tick" id="defer"><label for="defer" class="flex-grow-1">Defer Layout Update</label><button class="upd">Update</button></div>
 </aside>

 <form class="dlg" role="dialog" aria-label="Date Filter (Years)" onsubmit="return false">
  <div class="dlg-head d-flex align-items-center"><span class="flex-grow-1">Date Filter (Years)</span><button type="button" class="q">?</button><button type="button" class="x" aria-label="Close"><svg width="11" height="11" viewBox="0 0 11 11" stroke="#111" stroke-width="1.200"><path d="M.5.500l10 10M10.500.500l-10 10"/></svg></button></div>
  <div class="dlg-body">
   <div class="d-flex align-items-center gap-1"><span>Show items for which the date</span><span class="flex-grow-1 hr-l"></span></div>
   <div class="d-flex align-items-center drow">
    <div class="drop"><select aria-label="Condition"><option>is between</option></select><span><svg width="9" height="6" viewBox="0 0 9 6"><path d="M.7.700L4.500 4.500 8.300.700" fill="none" stroke="#444"/></svg></span></div>
    <input class="field f1" id="from" aria-label="From" value="01-01-2016"><button type="button" class="cal" aria-label="Pick start"><svg width="17" height="16"><use href="#cal"/></svg></button>
    <label class="and" for="to">and</label><input class="field" id="to" value="30-09-2017"><button type="button" class="cal" aria-label="Pick end"><svg width="17" height="16"><use href="#cal"/></svg></button>
   </div>
   <div class="d-flex align-items-center whole"><input type="checkbox" class="tick dark" id="whole"><label for="whole" class="ms-1">Whole Days</label></div>
   <div class="d-flex justify-content-end dfoot"><button class="dbtn main">OK</button><button type="button" class="dbtn">Cancel</button></div>
  </div>
 </form>
</main>

<footer>
 <div class="status d-flex align-items-center">
  <span class="ready">Ready</span>
  <svg class="macro" width="13" height="13" viewBox="0 0 13 13"><circle cx="2.500" cy="2.500" r="2.500" fill="#555"/><path d="M6 1h7v3H6z" fill="#555"/><path d="M1.500 6v6.500h11V4" fill="none" stroke="#555"/><path d="M3 6.500h2M6 6.500h2M9 6.500h2M3 8.500h2M6 8.500h2M9 8.500h2M3 10.500h2M6 10.500h2M9 10.500h2" stroke="#666"/></svg>
  <div class="ms-auto d-flex align-items-center">
   <button class="vbtn on" aria-label="Normal"><svg width="13" height="13" viewBox="0 0 13 13" fill="none" stroke="#666"><path d="M.5.500h12v12H.5zM.5 4.500h12M.5 8.500h12M4.500.500v12M8.500.500v12"/></svg></button>
   <button class="vbtn" aria-label="Page layout"><svg width="14" height="13" viewBox="0 0 14 13" fill="none" stroke="#666"><path d="M.5.500h13v12H.5zM3.500 2.500h7v8h-7zM5 4.500h4M5 6.500h4M5 8.500h4"/></svg></button>
   <button class="vbtn" aria-label="Page break preview"><svg width="14" height="13" viewBox="0 0 14 13" fill="none" stroke="#666"><path d="M.5.500h13v12H.5zM5.500.500v7h8M9.500.500v7M.5 7.500h5"/></svg></button>
   <button class="zm" aria-label="Zoom out"><svg width="7" height="7" viewBox="0 0 7 7"><path d="M0 3.500h7" stroke="#555" stroke-width="2"/></svg></button>
   <input type="range" class="zoom" min="10" max="190" value="85" aria-label="Zoom">
   <button class="zm" aria-label="Zoom in"><svg width="8" height="8" viewBox="0 0 8 8"><path d="M0 4h8M4 0v8" stroke="#555" stroke-width="2"/></svg></button>
   <span class="zl">85%</span>
  </div>
 </div>
 <div class="tasks d-flex align-items-center">
  <button class="task sys" aria-label="Start"><svg width="17" height="17" viewBox="0 0 17 17" fill="#fff"><path d="M0 2.500l7-1V8H0zM8 1.300L17 0v8H8zM0 9h7v6.500l-7-1zM8 9h9v8l-9-1.300z"/></svg></button>
  <button class="task sys" aria-label="Cortana"><svg width="16" height="16" viewBox="0 0 16 16"><circle cx="8" cy="8" r="6.500" fill="none" stroke="#fff" stroke-width="2"/></svg></button>
  <button class="task" aria-label="Task view"><svg width="20" height="16" viewBox="0 0 20 16" fill="none" stroke="#fff"><path d="M5.500 1.500h9v13h-9zM3 3.500H.5v9H3M17 3.500h2.500v9H17" stroke-width="1.200"/></svg></button>
  <button class="task run" aria-label="Edge"><svg width="21" height="24" viewBox="0 0 21 24"><path d="M1 11C2 4 7 1 11 1c6 0 9 4 9 9v3H7.500c.5 7 7 7 11 4v4.500C11 26 3 23 3 15c0-4 2-6 5-8-3 1-5 2-7 4zm6.500-1.500H14c0-5-6-5-6.500 0z" fill="#0c7bd8"/></svg></button>
  <button class="task run" aria-label="File Explorer"><svg width="22" height="22" viewBox="0 0 22 22"><path d="M0 1h9v3h13v17H0z" fill="#f6d478"/><path d="M2 2h5v2H2z" fill="#d7881f"/><path d="M0 5h22v16H0z" fill="#fbe09a"/><path d="M4 21v-9h14v9h-3v-5H7v5z" fill="#3ea9dd"/></svg></button>
  <button class="task" aria-label="Outlook"><svg width="22" height="23" viewBox="0 0 22 23"><path d="M0 2l13-2v23L0 21z" fill="#0071c5"/><path d="M13 5h9v13h-9z" fill="#fff"/><path d="M13 6l4 5 5-6M13 17h9V5" fill="none" stroke="#0071c5" stroke-width="1.500"/><ellipse cx="6.500" cy="11.500" rx="2.600" ry="3.800" fill="none" stroke="#fff" stroke-width="2"/></svg></button>
  <button class="task run now" aria-label="Excel"><svg width="22" height="23" viewBox="0 0 22 23"><path d="M13 3h9v17h-9z" fill="#fff"/><path d="M13 6h8M13 9h8M13 12h8M13 15h8M13 18h8M17.500 3v16" stroke="#217346"/><path d="M0 2l13-2v23L0 21z" fill="#217346"/><text x="2" y="16" font-size="13" font-weight="700" fill="#fff">X</text></svg></button>
  <button class="task run" aria-label="Word"><svg width="22" height="23" viewBox="0 0 22 23"><path d="M13 3h9v17h-9z" fill="#fff"/><path d="M13 6h7M13 9h7M13 12h7M13 15h7M13 18h7" stroke="#2b579a" stroke-width="1.300"/><path d="M0 2l13-2v23L0 21z" fill="#2b579a"/><text x="1" y="15" font-size="11" font-weight="700" fill="#fff">W</text></svg></button>
  <button class="task" aria-label="OneNote"><svg width="22" height="23" viewBox="0 0 22 23"><path d="M13 3h9v17h-9z" fill="#fff"/><path d="M13 6h6M13 9h6M13 12h6M13 15h6M13 18h6M19.500 3v17" stroke="#80397b" stroke-width="1.300"/><path d="M0 2l13-2v23L0 21z" fill="#80397b"/><text x="2" y="16" font-size="12" font-weight="700" fill="#fff">N</text></svg></button>
  <button class="task" aria-label="Notepad"><svg width="22" height="23" viewBox="0 0 22 23"><path d="M8 2l13-1v18l-5 3z" fill="#d9dcdd"/><path d="M7 2l13 1-5 19L0 18z" fill="#72bccb"/><path d="M7 2l13 1-2 6L5 7z" fill="#b7e1e6"/><path d="M7 1l13 1" stroke="#777" stroke-width="2" stroke-dasharray="1 1"/></svg></button>
  <button class="task" aria-label="Paint"><svg width="24" height="26" viewBox="0 0 24 26"><path d="M12 5C4 5 0 11 1 17c1 5 5 2 6 4 1 3 5 4 9 1 5-3 6-16-4-17z" fill="#cfe3f2"/><circle cx="9" cy="9" r="2" fill="#49a942"/><circle cx="4.500" cy="14" r="2" fill="#d93a2b"/><circle cx="15" cy="9" r="2" fill="#e8b22f"/><circle cx="8" cy="15" r="1.700" fill="#12100d"/><circle cx="15" cy="20" r="2" fill="#3b6fc4"/><path d="M20 5l-2 18-3-2z" fill="#e07b28"/><path d="M19 0l5 1-2 6h-3z" fill="#c9a25a"/></svg></button>
  <button class="task run" aria-label="Sticky Notes"><svg width="18" height="21" viewBox="0 0 18 21"><path d="M0 0h18v12l-8 8H0z" fill="#f3e68c"/><path d="M18 12l-8 8v-8z" fill="#6f6a3d"/></svg></button>
  <div class="ms-auto d-flex align-items-center traybox">
   <svg width="12" height="8" viewBox="0 0 12 8"><path d="M1 7l5-5 5 5" fill="none" stroke="#fff" stroke-width="1.300"/></svg>
   <svg width="16" height="13" viewBox="0 0 16 13" fill="none" stroke="#fff"><path d="M5 4.500h9.500v7H5M15.500 7v2M2.500 0v3M5 0v3M1 3.500h5v2L3.500 7 1 5.500zM3.500 7v4"/><path d="M7 6.500h6v3H7z" fill="#fff"/></svg>
   <svg width="17" height="12" viewBox="0 0 17 12"><path d="M1 9c-1-3 1-4 3-4 1-5 7-5 8 0h-3c-4 0-4 5-3 6H3c-1 0-2-1-2-2z" fill="#1068b8"/><path d="M8 12c-3-1-2-5 1-5 1-3 5-2 5 0 3 0 4 4 1 5z" fill="#1583d8"/></svg>
   <svg width="17" height="12" viewBox="0 0 17 12" fill="#fff"><path d="M1 9c-1-3 1-4 3-4 1-5 7-5 8 0h-3c-4 0-4 5-3 6H3c-1 0-2-1-2-2z"/><path d="M8 12c-3-1-2-5 1-5 1-3 5-2 5 0 3 0 4 4 1 5z"/></svg>
   <svg width="14" height="14" viewBox="0 0 14 14" fill="none" stroke="#ccc" stroke-width="1.300"><path d="M1 12C1 6 6 1 12 1M4 13c0-5 3-8 8-9M7 13c0-3 2-5 5-6"/><circle cx="11" cy="12" r="1.200" fill="#fff"/></svg>
   <svg width="17" height="13" viewBox="0 0 17 13" fill="none" stroke="#fff" stroke-width="1.200"><path d="M.7 4.500h2.500L7 1v11L3.200 8.500H.7zM9.500 4c1 1.500 1 3.500 0 5M11.500 2.500c2 2.500 2 5.500 0 8M13.500 1c3 3 3 8 0 11"/></svg>
   <div class="text-center lang">ENG<br>US</div><div class="text-center clock">16:11<br>30-Sep-2017</div>
   <svg width="17" height="16" viewBox="0 0 17 16" fill="none" stroke="#fff" stroke-width="1.200"><path d="M.7.700h15.600v11.600h-5L8.500 15l-2.800-2.700h-5z"/></svg>
  </div>
 </div>
</footer>

<script>
const widths=[23,140,97,40,55,67,67,43,67,54,54,54,54,54,54,54,54,0];
document.getElementById('cols').innerHTML=widths.map(w=>w?`<col style="width:${w}px">`:'<col>').join('');
document.getElementById('heads').innerHTML='<th scope="col"><svg class="ms-auto me-1" width="8" height="8"><path d="M8 0v8H0z" fill="#b5b5b5"/></svg></th>'+
 [...'ABCDEFGHIJKLMNOPQ'].map(c=>`<th scope="col"${c==='A'?' class="on"':''}>${c}</th>`).join('');
const ex=s=>`<span class="exp ${s}"></span>`;
const zero=y=>['b',`<td class="p i2">${ex('plus')}${y}</td>`,0,0,0,0];
const mon=(m,a,d,t)=>['',`<td class="p i3">${m}</td>`,a,d,0,t];
const data=[
 ['hd','<td class="p">Count of Bacterin Donor#</td><td class="p">Column Labels<button class="fbtn" aria-label="Filter columns"><svg width="8" height="4" fill="#555"><use href="#dn"/></svg></button></td><td class="p"></td><td class="p"></td><td class="p last"></td>'],
 ['hd rule','<td class="p">Row Labels<button class="fbtn" aria-label="Filter rows"><svg width="13" height="11" viewBox="0 0 13 11" fill="#555"><path d="M4 1h9v2l-3 2v5H8V5L4 3zM0 7h5L2.500 10z"/></svg></button></td><td class="p">ACCEPT</td><td class="p">DEFER</td><td class="p">PENDING</td><td class="p last">Grand Total</td>'],
 ['b rule',`<td class="p i1">${ex('')}18</td>`,'','','',''],
 zero('&lt;6/8/2005'),...[2005,2006,2007,2008,2009,2010,2011,2012,2013,2014,2015].map(zero),
 ['b',`<td class="p i2">${ex('')}2016</td>`,28,4,0,32],
 mon('Jan',2,0,2),mon('Feb',4,1,5),mon('Mar',1,0,1),mon('Apr',3,0,3),mon('May',3,0,3),mon('Jun',3,1,4),mon('Jul',2,0,2),mon('Aug',0,0,0),mon('Sep',1,2,3),mon('Oct',2,0,2),mon('Nov',2,0,2)];
document.getElementById('rows').innerHTML=data.map((r,i)=>{
 let [c,first,...n]=r; const on=i===11;
 if(on) first=first.replace('class="p','class="sel p');
 return `<tr class="${c}"><th scope="row"${on?' class="on"':''}>${i+1}</th>${first}${n.map((v,k)=>`<td class="p n${k===3?' last':''}">${v}</td>`).join('')}${'<td></td>'.repeat(12)}</tr>`;
}).join('');
const fields=[['Bacterin Donor#',1,0],['Recovery Agency',1,1],['Date Donor Received',1,1],['DONOR STATUS',1,0],['Quarters',0,1],['Years',1,1]];
document.getElementById('fields').innerHTML=fields.map(([n,c,f],i)=>`<li class="${c?'b':''}"><input type="checkbox" class="tick" id="f${i}"${c?' checked':''}><label for="f${i}">${n}</label>${f?'<svg class="ff" width="12" height="12"><use href="#fun"/></svg>':''}</li>`).join('')+'<li class="more">More Tables...</li>';
const from=document.getElementById('from');from.focus();from.select();
</script>
<script src="https://cdn.jsdelivr.net/npm/bootstrap@5.3.0/dist/js/bootstrap.bundle.min.js"></script>
</body>
</html>
